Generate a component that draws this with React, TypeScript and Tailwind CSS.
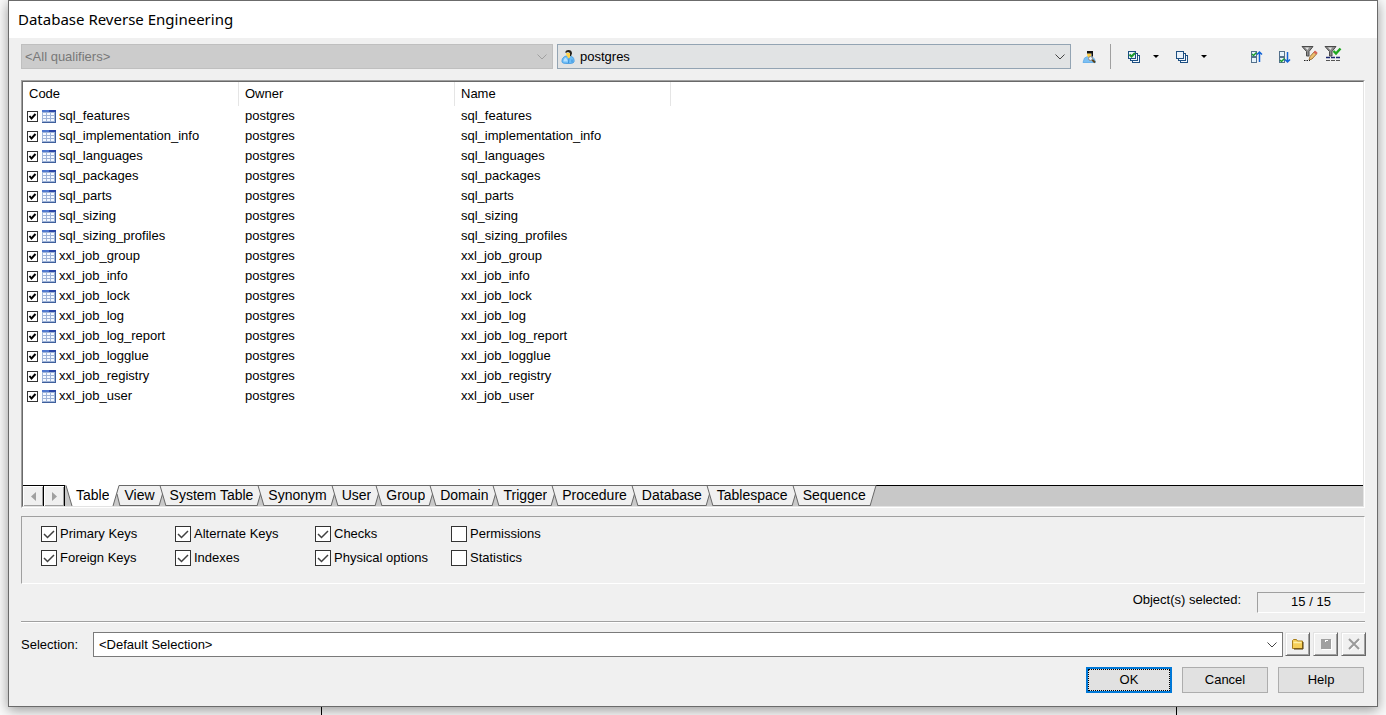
import { useState, ReactNode } from 'react';
import clsx from 'clsx';

const TABLES = [
  'sql_features',
  'sql_implementation_info',
  'sql_languages',
  'sql_packages',
  'sql_parts',
  'sql_sizing',
  'sql_sizing_profiles',
  'xxl_job_group',
  'xxl_job_info',
  'xxl_job_lock',
  'xxl_job_log',
  'xxl_job_log_report',
  'xxl_job_logglue',
  'xxl_job_registry',
  'xxl_job_user',
];

const TABS = [
  'Table', 'View', 'System Table', 'Synonym', 'User', 'Group',
  'Domain', 'Trigger', 'Procedure', 'Database', 'Tablespace', 'Sequence',
];

const OPTIONS = [
  { label: 'Primary Keys', checked: true },
  { label: 'Alternate Keys', checked: true },
  { label: 'Checks', checked: true },
  { label: 'Permissions', checked: false },
  { label: 'Foreign Keys', checked: true },
  { label: 'Indexes', checked: true },
  { label: 'Physical options', checked: true },
  { label: 'Statistics', checked: false },
];

/* Icons */

function Chevron({ className }: { className?: string }) {
  return (
    <svg viewBox="0 0 10 6" className={clsx('pointer-events-none absolute right-1.5 w-2.5 h-1.5', className)} fill="none" stroke="currentColor">
      <path d="M0.5 0.5 5 5 9.5 0.5" />
    </svg>
  );
}

function TableIcon() {
  return (
    <svg viewBox="0 0 14 13" className="w-3.5 h-[13px] shrink-0" shapeRendering="crispEdges">
      <rect width="14" height="13" fill="#9fb4d8" />
      <rect width="14" height="2" fill="#4f78d0" />
      <rect x="7" width="7" height="2" fill="#2b46a8" />
      <path d="M1 3h3v2H1zM5 3h3v2H5zM9 3h3v2H9zM1 6h3v2H1zM5 6h3v2H5zM9 6h3v2H9zM1 9h3v2H1zM5 9h3v2H5zM9 9h3v2H9z" fill="#f4f8ff" />
      <path d="M13 2h1v11H0v-1h13z" fill="#3f5f9c" />
    </svg>
  );
}

function UserIcon() {
  return (
    <svg viewBox="0 0 14 16" className="w-3.5 h-4">
      <path d="M1 13C0.500 10 2.500 7.500 5 7h5c2.500 1 3.500 3.500 3 6-1 1.500-3 1.500-6 1.500S1.500 14.500 1 13z" fill="#6dbdf7" stroke="#3d97e0" strokeWidth="0.800" />
      <path d="M2.500 12.500C2.500 10.500 3.500 9 5 8.500l2 4z" fill="#b4e0ff" />
      <path d="M8 8.500 7.500 14M11 10.500v3" stroke="#2f86d2" strokeWidth="0.800" />
      <path d="M5 4h4.500v3L8.500 9 7.500 9.500 5.500 6.500z" fill="#ffd24a" />
      <path d="M4.500 4C4 2 5.500 1 7.500 1S11 2 11 4.500L10 7H9V4L7 3z" fill="#24211c" />
    </svg>
  );
}

function UserSearchIcon() {
  return (
    <svg viewBox="0 0 14 16" className="w-3.5 h-4">
      <path d="M1 13.500 2.500 9 5.500 7.500H10l2.500 2.500 1 3.500z" fill="#7cc0f3" stroke="#5aaae8" strokeWidth="0.800" />
      <path d="M5 4.500h4v3L7.500 9 5.500 7.500z" fill="#ffcb3c" />
      <path d="M5 2h6v5.500H9.500V4.500H5z" fill="#111" />
      <path d="M10 10.500 13 13.500" stroke="#5c4016" strokeWidth="2" />
      <circle cx="8.500" cy="9.500" r="2" fill="#e8eef4" stroke="#8a8a8a" />
    </svg>
  );
}

function StackIcon({ checked }: { checked?: boolean }) {
  return (
    <svg viewBox="0 0 16 16" className="w-4 h-4" shapeRendering="crispEdges" fill="none" stroke="#1d4f82">
      <rect x="5.500" y="6.500" width="7" height="7" fill="#f4f8fc" />
      <rect x="3.500" y="4.500" width="7" height="7" fill="#f4f8fc" />
      <rect x="1.500" y="2.500" width="7" height="7" fill="#eaf2fa" />
      {checked && <path d="M2.500 5.500 4.500 7.500 8 4" stroke="#1a9a2c" strokeWidth="2" shapeRendering="auto" />}
    </svg>
  );
}

function MoveIcon({ down }: { down?: boolean }) {
  return (
    <svg viewBox="0 0 16 16" className="w-4 h-4" fill="none">
      <g shapeRendering="crispEdges" stroke="#54718c">
        <rect x="2.500" y="2.500" width="5" height="5" fill="#e6f3fc" />
        <rect x="2.500" y="8.500" width="5" height="5" fill="#e6f3fc" />
      </g>
      <path d={down ? 'M3 11l1.500 1.500L7.500 9.500' : 'M3 5l1.500 1.500L7.500 3.500'} stroke="#1a9a2c" strokeWidth="1.500" />
      <path d={down ? 'M10.500 3v10M8 10.500l2.500 2.500 2.500-2.500' : 'M10.500 13V3M8 5.500 10.500 3 13 5.500'} stroke="#1263d6" strokeWidth="1.500" />
    </svg>
  );
}

function Funnel() {
  return (
    <>
      <path d="M1 0.500h11L8 5.500V10H5.500V5.500z" fill="#8c8c8c" stroke="#4a4a4a" />
      <path d="M4 1.500h4L6.500 4z" fill="#e4e4e4" />
    </>
  );
}

function FilterEditIcon() {
  return (
    <svg viewBox="0 0 18 18" className="w-[18px] h-[18px]">
      <Funnel />
      <path d="M8 14 9 10.500 13.500 5.500l2.500 2L11 13z" fill="#ecc070" stroke="#8a5a20" strokeWidth="0.800" />
      <path d="M12.500 6.500 14 4.500l2.500 2L15 8.500z" fill="#d9665a" />
      <path d="M3 14.500h1.500M5.500 14.500h1.500M8 14.500h1" stroke="#222" />
    </svg>
  );
}

function FilterCheckIcon() {
  return (
    <svg viewBox="0 0 18 18" className="w-[18px] h-[18px]">
      <Funnel />
      <path d="M9.500 5 12 7.500 16.500 2.500" stroke="#1fa81f" strokeWidth="2.400" fill="none" />
      <path d="M2 11.500h4M7 11.500h4M12 11.500h4" stroke="#1c2870" strokeWidth="1.300" />
      <path d="M2 14.500h4M7 14.500h4M12 14.500h4" stroke="#555" />
    </svg>
  );
}

function FolderIcon() {
  return (
    <svg viewBox="0 0 14 12" className="w-3.5 h-3">
      <path d="M1.500 10.500v-8l1-1h3l1 1.500h5v7.500z" fill="#f6cf58" stroke="#a87e1c" />
      <path d="M2.500 4.500h8" stroke="#fff0a8" strokeWidth="1.500" />
      <path d="M12 4v7H3" stroke="#4c380c" fill="none" />
    </svg>
  );
}

function SaveIcon() {
  return (
    <svg viewBox="0 0 12 12" className="w-3 h-3" shapeRendering="crispEdges">
      <path d="M11 2h1v10H2v-1h9z" fill="#fff" />
      <path d="M1 1h10v10H1z" fill="#a0a0a0" />
      <path d="M5 2h3v1H6v1H5z" fill="#fff" />
    </svg>
  );
}

function DeleteIcon() {
  return (
    <svg viewBox="0 0 14 14" className="w-3.5 h-3.5" fill="none">
      <path d="M3 3l10 10M13 3 3 13" stroke="#fff" strokeWidth="1.500" />
      <path d="M2 2l10 10M12 2 2 12" stroke="#9a9a9a" strokeWidth="2" />
    </svg>
  );
}

/* Controls */

function ToolButton({ label, className, children }: { label: string; className?: string; children: ReactNode }) {
  return (
    <button type="button" aria-label={label} title={label} className={clsx('flex shrink-0 items-center justify-center', className)}>
      {children}
    </button>
  );
}

function MenuArrow({ label, className }: { label: string; className?: string }) {
  return (
    <ToolButton label={label} className={clsx('w-2 h-4', className)}>
      <svg viewBox="0 0 6 3" className="w-1.5 h-[3px]"><path d="M0 0h6L3 3z" /></svg>
    </ToolButton>
  );
}

function SmallButton({ label, disabled, children }: { label: string; disabled?: boolean; children: ReactNode }) {
  return (
    <button
      type="button"
      aria-label={label}
      disabled={disabled}
      className="flex h-6 w-[25px] items-center justify-center border border-t-[#e3e3e3] border-l-[#e3e3e3] border-r-[#696969] border-b-[#696969] shadow-[inset_1px_1px_0_#fff,inset_-1px_-1px_0_#a0a0a0]"
    >
      {children}
    </button>
  );
}

function OptionBox({ label, defaultChecked }: { label: string; defaultChecked: boolean }) {
  return (
    <label className="flex h-4 items-center gap-[3px] whitespace-nowrap">
      <span className="grid shrink-0">
        <input type="checkbox" defaultChecked={defaultChecked} className="peer col-start-1 row-start-1 h-4 w-4 appearance-none border border-[#333] bg-white" />
        <svg viewBox="0 0 16 16" className="pointer-events-none invisible col-start-1 row-start-1 h-4 w-4 peer-checked:visible" fill="none" stroke="#404040" strokeWidth="1.500">
          <path d="M3 8l3.500 3.500L13 5" />
        </svg>
      </span>
      {label}
    </label>
  );
}

const TAB_FILLS = { none: '#c8c8c8', active: '#ffffff', idle: '#f0f0f0' };
type TabState = keyof typeof TAB_FILLS;

// The slanted edge shared by two neighbouring tabs
function TabEdge({ left, right }: { left: TabState; right: TabState }) {
  const first = left === 'none';
  return (
    <svg
      viewBox={first ? '4 0 11 21' : '0 0 15 21'}
      className={clsx('h-[21px] shrink-0', first ? 'w-[11px]' : 'w-[15px]')}
      fill="none"
      stroke="#696969"
    >
      <rect width="15" height="21" fill="#c8c8c8" stroke="none" />
      {!first && <path d="M0 0H10L4 21H0z" fill={TAB_FILLS[left]} stroke="none" />}
      {right !== 'none' && <path d={left === 'active' ? 'M10 0H15V21H11L8 9z' : 'M5 0H15V21H11z'} fill={TAB_FILLS[right]} stroke="none" />}

      {left === 'idle' && <path d="M0 0.500H10M0 20.500H4" />}
      {right === 'idle' && <path d={left === 'active' ? 'M10 0.500H15M11 20.500H15' : 'M5 0.500H15M11 20.500H15'} />}
      {right === 'none' && <path d="M10 0.500H15" stroke="#000" />}

      {!first && <path d={right === 'none' || left === 'active' ? 'M10 0.500 4 21' : 'M7.500 9 4 21'} />}
      {right !== 'none' && <path d={left === 'active' ? 'M8 9 11 21' : 'M5 0.500 11 21'} />}
    </svg>
  );
}

function ObjectTabs() {
  const [active, setActive] = useState(0);
  const state = (i: number): TabState => (i < 0 || i >= TABS.length ? 'none' : i === active ? 'active' : 'idle');

  return (
    <div className="flex h-[21px] shrink-0 bg-[#c8c8c8]">
      {['Scroll left', 'Scroll right'].map((label, i) => (
        <button
          key={label}
          type="button"
          aria-label={label}
          className="flex w-[21px] shrink-0 items-center justify-center border-t border-r border-black bg-[#f0f0f0] shadow-[inset_1px_1px_0_#fff,inset_-1px_-1px_0_#a0a0a0]"
        >
          <svg viewBox="0 0 5 9" className="h-[9px] w-[5px]" fill="#a0a0a0">
            <path d={i === 0 ? 'M5 0v9L0 4.500z' : 'M0 0v9l5-4.500z'} />
          </svg>
        </button>
      ))}
      <div role="tablist" className="flex">
        {TABS.map((tab, i) => (
          <div key={tab} className="flex">
            <TabEdge left={state(i - 1)} right={state(i)} />
            <button
              role="tab"
              type="button"
              aria-selected={i === active}
              onClick={() => setActive(i)}
              className={clsx(
                'whitespace-nowrap border-y text-sm leading-[19px]',
                i === active ? 'border-white bg-white' : 'border-[#696969] bg-[#f0f0f0]',
              )}
            >
              {tab}
            </button>
          </div>
        ))}
        <TabEdge left={state(TABS.length - 1)} right="none" />
      </div>
      <div className="flex-1 border-t border-black" />
    </div>
  );
}

export default function App() {
  const [selected, setSelected] = useState<string[]>(TABLES);

  const toggle = (name: string) => {
    setSelected(prev => (prev.includes(name) ? prev.filter(n => n !== name) : [...prev, name]));
  };

  return (
    <div className="relative flex min-h-screen overflow-hidden bg-[#fafafa] px-2 pb-2 font-['Liberation_Sans',Arial,sans-serif] text-[13px] leading-4 text-black">
      {/* Window edges behind the dialog */}
      <div className="absolute inset-y-0 left-[321px] w-px bg-black" />
      <div className="absolute inset-y-0 right-[209px] w-px bg-black" />

      <div role="dialog" aria-labelledby="dialog-title" className="relative flex min-w-0 flex-1 flex-col border border-[#6b6b6b] bg-[#f0f0f0] shadow-[0_3px_12px_rgba(0,0,0,0.4)]">
        <h1 id="dialog-title" className="h-[37px] bg-white px-[9px] font-['Noto_Sans','Open_Sans',sans-serif] text-[15px] leading-[37px]">
          Database Reverse Engineering
        </h1>

        <div className="flex flex-1 flex-col px-3 pt-1.5 pb-[13px]">
          {/* Toolbar */}
          <div className="flex h-[25px]">
            <div className="relative mr-1 flex min-w-0 flex-[532] items-center">
              <select aria-label="Qualifier" disabled className="h-full w-full appearance-none border border-[#bfbfbf] bg-[#cccccc] px-[3px] text-[#787878] opacity-100">
                <option>&lt;All qualifiers&gt;</option>
              </select>
              <Chevron className="text-[#a0a0a0]" />
            </div>
            <div className="relative flex min-w-0 flex-[514] items-center">
              <select aria-label="Owner" className="h-full w-full appearance-none border border-[#93a4b3] bg-[#e1e3e4] pl-[22px]">
                <option>postgres</option>
              </select>
              <span className="pointer-events-none absolute left-1"><UserIcon /></span>
              <Chevron className="text-[#444]" />
            </div>

            <div className="flex w-[294px] shrink-0 items-center pr-[23px] pl-2.5">
              <ToolButton label="Select user" className="w-4"><UserSearchIcon /></ToolButton>
              <div className="ml-[13px] h-full w-px bg-[#a0a0a0]" />
              <ToolButton label="Select all" className="ml-4"><StackIcon checked /></ToolButton>
              <MenuArrow label="Select all options" className="ml-[9px]" />
              <ToolButton label="Deselect all" className="ml-[15px]"><StackIcon /></ToolButton>
              <MenuArrow label="Deselect all options" className="ml-[9px]" />
              <ToolButton label="Move selected to top" className="ml-auto"><MoveIcon /></ToolButton>
              <ToolButton label="Move selected to bottom" className="ml-3"><MoveIcon down /></ToolButton>
              <div className="flex gap-[5px] pb-1 pl-2">
                <ToolButton label="Customize filter"><FilterEditIcon /></ToolButton>
                <ToolButton label="Enable filter"><FilterCheckIcon /></ToolButton>
              </div>
            </div>
          </div>

          {/* Object list */}
          <div className="mt-[11px] flex flex-1 flex-col border border-t-[#a0a0a0] border-l-[#a0a0a0] border-r-white border-b-white">
            <div className="flex flex-1 flex-col border border-t-[#696969] border-l-[#696969] border-r-[#e3e3e3] border-b-[#e3e3e3]">
              <div className="flex-1 bg-white">
                <table className="w-full table-fixed border-separate border-spacing-0 text-left">
                  <thead>
                    <tr className="h-6">
                      {['Code', 'Owner', 'Name'].map(h => (
                        <th key={h} className="w-[216px] border-r border-[#e5e5e5] px-1.5 py-0 font-normal">{h}</th>
                      ))}
                      <td />
                    </tr>
                  </thead>
                  <tbody>
                    {TABLES.map(name => (
                      <tr key={name} className="h-5">
                        <td className="p-0 pl-1">
                          <label className="flex items-center">
                            <span className="mr-1 grid shrink-0">
                              <input
                                type="checkbox"
                                checked={selected.includes(name)}
                                onChange={() => toggle(name)}
                                className="peer col-start-1 row-start-1 h-[11px] w-[11px] appearance-none border border-[#333] bg-white"
                              />
                              <svg viewBox="0 0 11 11" className="pointer-events-none invisible col-start-1 row-start-1 h-[11px] w-[11px] peer-checked:visible" fill="none" stroke="#000" strokeWidth="2">
                                <path d="M2.500 5 4.500 7.500 8.500 3" />
                              </svg>
                            </span>
                            <TableIcon />
                            <span className="ml-[3px]">{name}</span>
                          </label>
                        </td>
                        <td className="px-1.5 py-0">postgres</td>
                        <td className="px-1.5 py-0">{name}</td>
                        <td />
                      </tr>
                    ))}
                  </tbody>
                </table>
              </div>
              <ObjectTabs />
            </div>
          </div>

          {/* Options */}
          <div className="mt-2 border border-t-[#a0a0a0] border-l-[#a0a0a0] border-r-white border-b-white pt-[9px] pr-4 pb-[17px] pl-[19px]">
            <div className="grid grid-cols-[134px_140px_136px_auto] gap-y-2">
              {OPTIONS.map(o => <OptionBox key={o.label} label={o.label} defaultChecked={o.checked} />)}
            </div>
          </div>

          <div className="mt-2 flex items-start justify-end gap-4">
            <span>Object(s) selected:</span>
            <output className="h-[21px] w-[108px] border border-t-[#a0a0a0] border-l-[#a0a0a0] border-r-white border-b-white text-center leading-[17px]">
              {selected.length} / {TABLES.length}
            </output>
          </div>

          <hr className="mt-2 h-0.5 border-t border-b border-t-[#a0a0a0] border-b-white" />

          {/* Saved selections */}
          <div className="mt-[9px] flex h-[25px]">
            <label htmlFor="selection" className="w-[72px] shrink-0 leading-[25px]">Selection:</label>
            <div className="relative flex min-w-0 flex-1 items-center">
              <select id="selection" className="h-full w-full appearance-none border border-[#7a7a7a] bg-white px-[5px]">
                <option>&lt;Default Selection&gt;</option>
              </select>
              <Chevron className="text-[#444]" />
            </div>
            <div className="-mr-px ml-0.5 flex gap-[3px]">
              <SmallButton label="Open selection"><FolderIcon /></SmallButton>
              <SmallButton label="Save selection" disabled><SaveIcon /></SmallButton>
              <SmallButton label="Delete selection" disabled><DeleteIcon /></SmallButton>
            </div>
          </div>

          <div className="mt-2.5 flex justify-end gap-2.5 pr-px">
            <button type="button" className="h-[26px] w-[86px] border-2 border-[#0078d7] bg-[#e1e1e1]">
              <span className="block h-full border border-dotted border-black leading-5">OK</span>
            </button>
            <button type="button" className="h-[26px] w-[86px] border border-[#adadad] bg-[#e1e1e1]">Cancel</button>
            <button type="button" className="h-[26px] w-[86px] border border-[#adadad] bg-[#e1e1e1]">Help</button>
          </div>
        </div>
      </div>
    </div>
  );
}
